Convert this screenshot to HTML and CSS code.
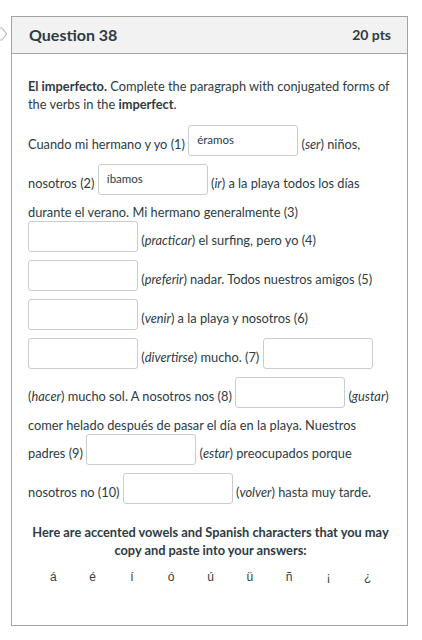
FILE: index.html
```html
<!DOCTYPE html>
<html lang="es">
<head>
<meta charset="utf-8">
<title>Question 38</title>
<link rel="stylesheet" href="styles.css">
</head>
<body>
<div class="page">
  <svg class="flag" width="8" height="14" viewBox="0 0 8 14" aria-hidden="true"><path d="M-4 1 H2 L6.5 7 L2 13 H-4" fill="none" stroke="#a9c2d6" stroke-width="1.2"/></svg>
  <div class="card">
    <div class="card-header">
      <span class="q-title">Question 38</span>
      <span class="q-pts">20 pts</span>
    </div>
    <div class="card-body">
      <p class="intro"><strong>El imperfecto.</strong> Complete the paragraph with conjugated forms of the verbs in the <strong>imperfect</strong>.</p>
      <p class="passage">Cuando mi hermano y yo (1) <input class="blank" type="text" value="éramos"> (<em>ser</em>) niños, nosotros (2) <input class="blank" type="text" value="íbamos"> (<em>ir</em>) a la playa todos los días durante el verano. Mi hermano generalmente (3) <input class="blank" type="text"> (<em>practicar</em>) el surfing, pero yo (4) <input class="blank" type="text"> (<em>preferir</em>) nadar. Todos nuestros amigos (5) <input class="blank" type="text"> (<em>venir</em>) a la playa y nosotros (6) <input class="blank" type="text"> (<em>divertirse</em>) mucho. (7) <input class="blank" type="text"> (<em>hacer</em>) mucho sol. A nosotros nos (8) <input class="blank" type="text"> (<em>gustar</em>) comer helado después de pasar el día en la playa. Nuestros padres (9) <input class="blank" type="text"> (<em>estar</em>) preocupados porque nosotros no (10) <input class="blank" type="text"> (<em>volver</em>) hasta muy tarde.</p>
      <p class="note">Here are accented vowels and Spanish characters that you may copy and paste into your answers:</p>
      <div class="chars">
        <span>á</span><span>é</span><span>í</span><span>ó</span><span>ú</span><span>ü</span><span>ñ</span><span>¡</span><span>¿</span>
      </div>
    </div>
  </div>
</div>
</body>
</html>
```
FILE: styles.css
```css
html, body {
  margin: 0;
  padding: 0;
  background: #ffffff;
}
body {
  font-family: Lato, "Noto Sans", sans-serif;
  color: #2d3b45;
}
.page {
  position: relative;
  padding: 16px 0 0 11px;
}
.flag {
  position: absolute;
  left: 0;
  top: 27px;
}
.card {
  width: 397px;
  height: 610px;
  box-sizing: border-box;
  border: 1px solid #a3a3a3;
}
.card-header {
  height: 37px;
  box-sizing: border-box;
  background: #f2f2f2;
  border-bottom: 1px solid #a3a3a3;
  display: flex;
  align-items: center;
  justify-content: space-between;
  padding: 0 16px 1px 17px;
}
.q-title {
  font-size: 16px;
  font-weight: 700;
}
.q-pts {
  font-size: 14px;
  font-weight: 700;
}
.card-body {
  padding: 11px 14px 0 16px;
  font-size: 12.8px;
  line-height: 18px;
}
.intro {
  margin: 12px 0 12px;
}
.passage {
  margin: 0 0 11px;
}
.blank {
  box-sizing: border-box;
  width: 110px;
  height: 31px;
  margin: 0 0 8px;
  padding: 0 8px 2px;
  border: 1px solid #c7cdd1;
  border-radius: 3px;
  font-family: Lato, "Noto Sans", sans-serif;
  font-size: 11.5px;
  color: #2d3b45;
  vertical-align: 5px;
  background: #fff;
}
.note {
  margin: 0;
  text-align: center;
  font-weight: 700;
}
.chars {
  display: flex;
  justify-content: center;
  margin-top: 9px;
  font-family: "Liberation Sans", Arial, sans-serif;
  font-size: 12px;
  color: #3a3a3a;
}
.chars span {
  width: 39.3px;
  text-align: center;
}
```
